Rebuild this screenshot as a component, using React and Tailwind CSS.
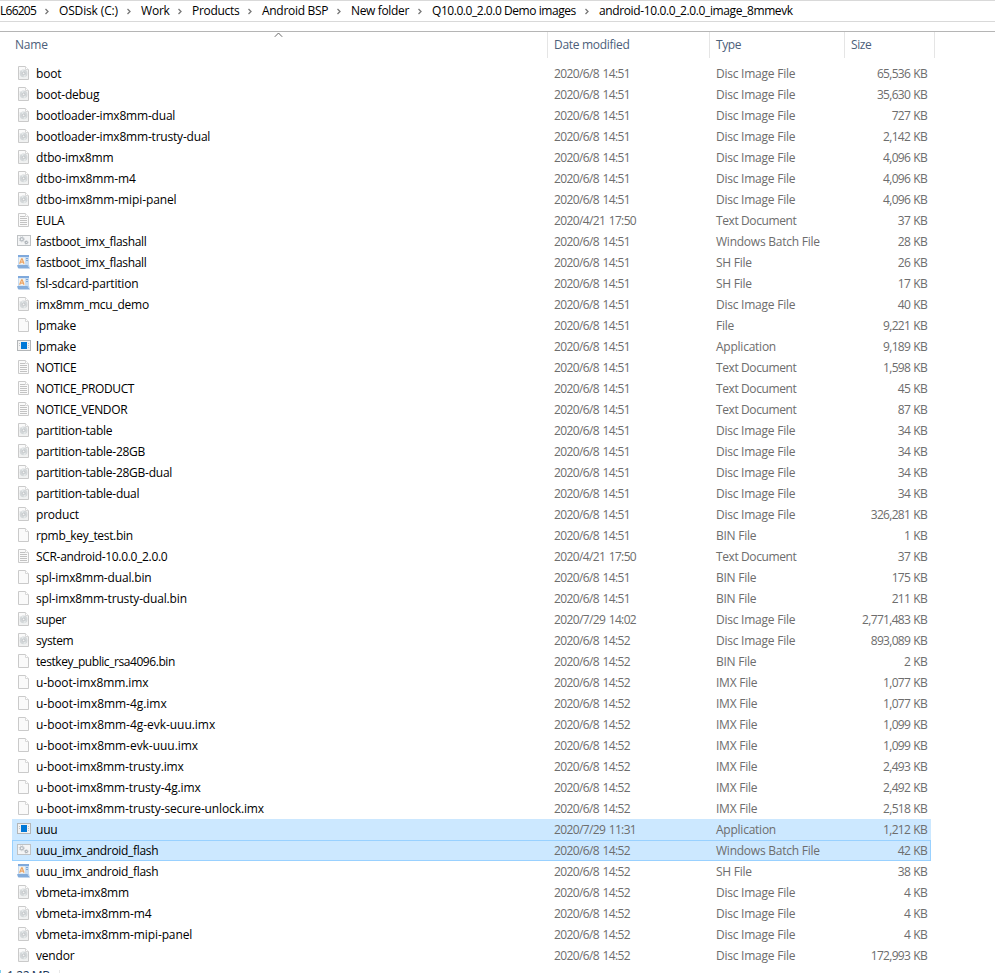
import clsx from "clsx";

const crumbs = [
    { label: "L66205", style: "w-[36px] tracking-[-0.75px]" },
    { label: "OSDisk (C:)", style: "w-[59px] tracking-[-0.15px]" },
    { label: "Work", style: "w-[28px] tracking-[-0.2px]" },
    { label: "Products", style: "w-[47px] tracking-[-0.3px]" },
    { label: "Android BSP", style: "w-[66px] tracking-[-0.3px]" },
    { label: "New folder", style: "w-[58px] tracking-[-0.35px]" },
    { label: "Q10.0.0_2.0.0 Demo images", style: "w-[144px] tracking-[-0.45px]" },
    { label: "android-10.0.0_2.0.0_image_8mmevk", style: "w-[200px] tracking-[-0.38px]" },
];

const typeNames = {
    disc: "Disc Image File",
    text: "Text Document",
    batch: "Windows Batch File",
    sh: "SH File",
    file: "File",
    app: "Application",
    bin: "BIN File",
    imx: "IMX File",
};

// [name, modified, type, size in KB, state]
const files = [
    ["boot", "2020/6/8 14:51", "disc", "65,536"],
    ["boot-debug", "2020/6/8 14:51", "disc", "35,630"],
    ["bootloader-imx8mm-dual", "2020/6/8 14:51", "disc", "727"],
    ["bootloader-imx8mm-trusty-dual", "2020/6/8 14:51", "disc", "2,142"],
    ["dtbo-imx8mm", "2020/6/8 14:51", "disc", "4,096"],
    ["dtbo-imx8mm-m4", "2020/6/8 14:51", "disc", "4,096"],
    ["dtbo-imx8mm-mipi-panel", "2020/6/8 14:51", "disc", "4,096"],
    ["EULA", "2020/4/21 17:50", "text", "37"],
    ["fastboot_imx_flashall", "2020/6/8 14:51", "batch", "28"],
    ["fastboot_imx_flashall", "2020/6/8 14:51", "sh", "26"],
    ["fsl-sdcard-partition", "2020/6/8 14:51", "sh", "17"],
    ["imx8mm_mcu_demo", "2020/6/8 14:51", "disc", "40"],
    ["lpmake", "2020/6/8 14:51", "file", "9,221"],
    ["lpmake", "2020/6/8 14:51", "app", "9,189"],
    ["NOTICE", "2020/6/8 14:51", "text", "1,598"],
    ["NOTICE_PRODUCT", "2020/6/8 14:51", "text", "45"],
    ["NOTICE_VENDOR", "2020/6/8 14:51", "text", "87"],
    ["partition-table", "2020/6/8 14:51", "disc", "34"],
    ["partition-table-28GB", "2020/6/8 14:51", "disc", "34"],
    ["partition-table-28GB-dual", "2020/6/8 14:51", "disc", "34"],
    ["partition-table-dual", "2020/6/8 14:51", "disc", "34"],
    ["product", "2020/6/8 14:51", "disc", "326,281"],
    ["rpmb_key_test.bin", "2020/6/8 14:51", "bin", "1"],
    ["SCR-android-10.0.0_2.0.0", "2020/4/21 17:50", "text", "37"],
    ["spl-imx8mm-dual.bin", "2020/6/8 14:51", "bin", "175"],
    ["spl-imx8mm-trusty-dual.bin", "2020/6/8 14:51", "bin", "211"],
    ["super", "2020/7/29 14:02", "disc", "2,771,483"],
    ["system", "2020/6/8 14:52", "disc", "893,089"],
    ["testkey_public_rsa4096.bin", "2020/6/8 14:52", "bin", "2"],
    ["u-boot-imx8mm.imx", "2020/6/8 14:52", "imx", "1,077"],
    ["u-boot-imx8mm-4g.imx", "2020/6/8 14:52", "imx", "1,077"],
    ["u-boot-imx8mm-4g-evk-uuu.imx", "2020/6/8 14:52", "imx", "1,099"],
    ["u-boot-imx8mm-evk-uuu.imx", "2020/6/8 14:52", "imx", "1,099"],
    ["u-boot-imx8mm-trusty.imx", "2020/6/8 14:52", "imx", "2,493"],
    ["u-boot-imx8mm-trusty-4g.imx", "2020/6/8 14:52", "imx", "2,492"],
    ["u-boot-imx8mm-trusty-secure-unlock.imx", "2020/6/8 14:52", "imx", "2,518"],
    ["uuu", "2020/7/29 11:31", "app", "1,212", "selected"],
    ["uuu_imx_android_flash", "2020/6/8 14:52", "batch", "42", "focused"],
    ["uuu_imx_android_flash", "2020/6/8 14:52", "sh", "38"],
    ["vbmeta-imx8mm", "2020/6/8 14:52", "disc", "4"],
    ["vbmeta-imx8mm-m4", "2020/6/8 14:52", "disc", "4"],
    ["vbmeta-imx8mm-mipi-panel", "2020/6/8 14:52", "disc", "4"],
    ["vendor", "2020/6/8 14:52", "disc", "172,993"],
];

const nameTracking = (name) => {
    if (name.startsWith("testkey")) return "tracking-[-0.43px]";
    if (name.startsWith("NOTICE_")) return "tracking-[-0.38px]";
    if (name.startsWith("u-boot-imx8mm-trusty")) return "tracking-[-0.12px]";
    if (name.startsWith("u-boot-imx8mm-")) return "tracking-[-0.04px]";
    if (name.startsWith("u-boot") || name.includes("8mm-m")) return "tracking-[-0.11px]";
    if (name.startsWith("spl-")) return "tracking-[-0.16px]";
    if (name.startsWith("imx8mm") || name.startsWith("partition")) return "tracking-[-0.25px]";
    if (name.includes("_")) return "tracking-[-0.32px]";
    if (name === "super" || name === "system" || name === "NOTICE") return "tracking-[-0.4px]";
    return "tracking-[-0.2px]";
};

// Blank sheet with a folded corner, shared by most of the icons
const Page = ({ children }) => (
    <>
        <path d="M2.5 1.5H9.5L12.5 4.5V14.5H2.5Z" fill="#fafafa" stroke="#cacaca" />
        <path d="M9.5 1.5V4.5H12.5" fill="#fff" stroke="#d8d8d8" />
        {children}
    </>
);

const FileIcon = ({ type }) => {
    let drawing = <Page />;

    if (type === "disc") {
        drawing = (
            <Page>
                <rect x="3" y="5" width="9" height="9" fill="#f0f1f1" />
                <circle cx="7.6" cy="8.4" r="3.8" fill="#d3d7d9" />
                <path d="M7.6 8.4L5.1 5.6A3.8 3.8 0 0 1 7.6 4.6ZM7.6 8.4L10.2 11A3.8 3.8 0 0 1 7.6 12.2Z" fill="#e4e8e9" />
                <circle cx="7.6" cy="8.4" r="1.3" fill="#f4f4f4" stroke="#b4b9bb" strokeWidth="0.7" />
            </Page>
        );
    } else if (type === "text") {
        drawing = (
            <Page>
                <path d="M4 4.5H9M4 6.5H11M4 8.5H11M4 10.5H11M4 12.5H11" stroke="#c2c2c2" />
            </Page>
        );
    } else if (type === "batch") {
        drawing = (
            <>
                <rect x="1.5" y="2.5" width="13" height="10" fill="#f4f5f6" stroke="#bfc2c4" />
                <circle cx="5.8" cy="6.2" r="1.6" fill="none" stroke="#b4bac0" strokeWidth="1.3" />
                <circle cx="5.8" cy="6.2" r="2.6" fill="none" stroke="#c6cbcf" strokeDasharray="1 1.04" />
                <circle cx="10.3" cy="9.4" r="1.1" fill="none" stroke="#a9afb4" strokeWidth="1.1" />
                <circle cx="10.3" cy="9.4" r="1.9" fill="none" stroke="#bec3c7" strokeWidth="0.8" strokeDasharray="0.8 0.7" />
            </>
        );
    } else if (type === "sh") {
        drawing = (
            <>
                <path d="M2 1H13V12H2Z" fill="#c6dcf3" />
                <path d="M2 2H13" stroke="#7fa9dc" strokeWidth="2" />
                <path d="M3 3.5H9V10.5H3Z" fill="#f3f3ee" />
                <path d="M10 4.5H12M10 6.5H12" stroke="#7ea8d8" />
                <path d="M3.6 9.8L5.6 4.8H6.2L8 9.8M4.5 8.1H7.3" fill="none" stroke="#eba364" strokeWidth="1.2" />
                <path d="M1.2 11H11.5L14 14.5H2.5Q1.2 13.5 1.2 11Z" fill="#83acdb" />
                <path d="M11.5 11H13L14 14.5Z" fill="#b9d1ec" />
            </>
        );
    } else if (type === "app") {
        drawing = (
            <>
                <rect x="1.5" y="2.5" width="13" height="10" fill="#f2f2f2" stroke="#b3b6b8" />
                <path d="M3 5.5H4M3 7.5H4M12 5.5H13M12 7.5H13M12 9.5H13" stroke="#bfc4c8" />
                <rect x="5" y="4" width="6" height="7" fill="#0078d7" />
            </>
        );
    }

    return (
        <svg className="mb-px h-4 w-4 shrink-0" viewBox="0 0 16 16">
            {drawing}
        </svg>
    );
};

const CrumbArrow = () => (
    <svg className="mt-px h-[9px] w-[23px] shrink-0" viewBox="0 0 23 9">
        <path d="M9.5 2L12 4.5L9.5 7" fill="none" stroke="#777" strokeWidth="1.3" />
    </svg>
);

const AddressBar = () => (
    <div className="flex h-[22px] items-start border-y border-[#d9d9d9] text-black">
        {crumbs.map((crumb, i) => (
            <div key={crumb.label} className="flex items-center">
                {i > 0 && <CrumbArrow />}
                <span className={clsx("shrink-0", crumb.style)}>{crumb.label}</span>
            </div>
        ))}
    </div>
);

const ColumnHeader = () => (
    <div className="relative flex h-[26px] text-[#4c607a] leading-[25px]">
        <div className="w-[548px] border-r border-[#e5e5e5] pl-[15px]">Name</div>
        <div className="w-[162px] border-r border-[#e5e5e5] pl-[6px] tracking-[-0.3px]">Date modified</div>
        <div className="w-[135px] border-r border-[#e5e5e5] pl-[6px] tracking-[-0.4px]">Type</div>
        <div className="w-[90px] border-r border-[#e5e5e5] pl-[6px] tracking-[-0.4px]">Size</div>
        {/* sort indicator */}
        <svg className="absolute left-[274px] top-0 h-[6px] w-[10px]" viewBox="0 0 10 6">
            <path d="M0.8 4.8L4.5 1L8.2 4.8" fill="none" stroke="#6a6a6a" />
        </svg>
    </div>
);

const FileRow = ({ file }) => {
    const [name, modified, type, size, state] = file;

    return (
        <div
            className={clsx(
                "ml-3 flex h-[21px] w-[919px] items-center border text-[#6d6d6d]",
                !state && "border-transparent",
                state === "selected" && "border-[#cce8ff] bg-[#cce8ff]",
                state === "focused" && "border-[#99d1ff] bg-[#cce8ff]"
            )}
        >
            <div className="flex w-[541px] items-center gap-1 pl-[3px] text-black">
                <FileIcon type={type} />
                <span className={nameTracking(name)}>{name}</span>
            </div>
            <div className="w-[162px] tracking-[-0.63px] [word-spacing:1px]">{modified}</div>
            <div className={clsx("w-[120px]", type === "text" ? "tracking-[-0.4px]" : "tracking-[-0.24px]")}>
                {typeNames[type]}
            </div>
            <div className="flex-1 pr-[3px] text-right tracking-[-0.68px] [word-spacing:0.6px]">{size} KB</div>
        </div>
    );
};

const App = () => (
    <div className="h-[973px] w-[995px] overflow-hidden whitespace-nowrap bg-white font-['Open_Sans','Noto_Sans',sans-serif] text-[12px] leading-[19px] tracking-[-0.2px]">
        <AddressBar />
        <div className="mt-[9px] border-t border-[#b5b5b5]">
            <ColumnHeader />
        </div>
        <div className="pt-[5px]">
            {files.map((file, i) => (
                <FileRow key={i} file={file} />
            ))}
        </div>
        <div className="flex pt-[4px] text-[#1e395b]">
            <div className="h-3 w-px bg-[#7fd0f0]" />
            <div className="-mt-px ml-[6px] w-[52px] leading-[14px] tracking-[-0.4px]">1.22 MB</div>
            <div className="h-3 w-px bg-[#e8e8e8]" />
        </div>
    </div>
);

export default App;
